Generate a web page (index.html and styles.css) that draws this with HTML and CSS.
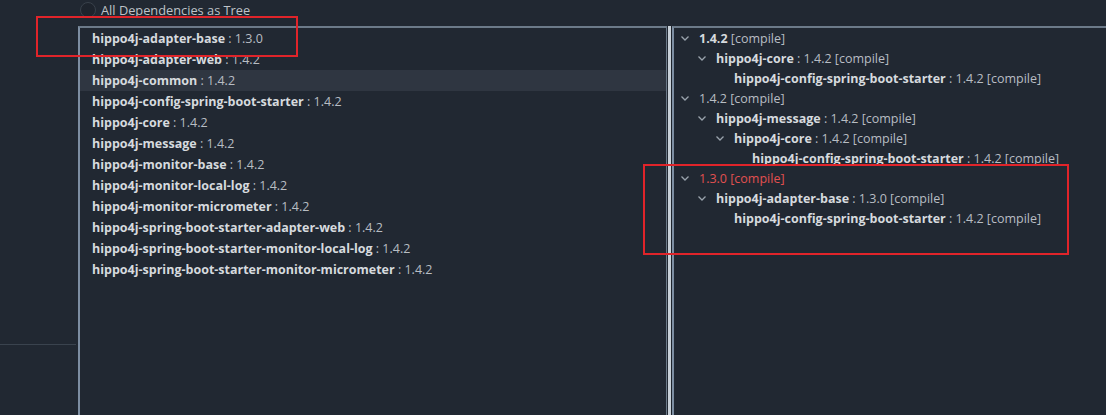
FILE: index.html
```html
<!DOCTYPE html>
<html>
<head>
<meta charset="utf-8">
<link rel="stylesheet" href="styles.css">
</head>
<body>
<div class="page">
  <div class="topbar">
    <span class="radio"></span>
    <span class="toplabel">All Dependencies as Tree</span>
  </div>
  <div class="main">
    <div class="sidebar"><div class="sidetop"></div></div>
    <div class="panel left">
      <div class="row"><b>hippo4j-adapter-base</b> : 1.3.0</div>
      <div class="row"><b>hippo4j-adapter-web</b> : 1.4.2</div>
      <div class="row sel"><b>hippo4j-common</b> : 1.4.2</div>
      <div class="row"><b>hippo4j-config-spring-boot-starter</b> : 1.4.2</div>
      <div class="row"><b>hippo4j-core</b> : 1.4.2</div>
      <div class="row"><b>hippo4j-message</b> : 1.4.2</div>
      <div class="row"><b>hippo4j-monitor-base</b> : 1.4.2</div>
      <div class="row"><b>hippo4j-monitor-local-log</b> : 1.4.2</div>
      <div class="row"><b>hippo4j-monitor-micrometer</b> : 1.4.2</div>
      <div class="row"><b>hippo4j-spring-boot-starter-adapter-web</b> : 1.4.2</div>
      <div class="row"><b>hippo4j-spring-boot-starter-monitor-local-log</b> : 1.4.2</div>
      <div class="row"><b>hippo4j-spring-boot-starter-monitor-micrometer</b> : 1.4.2</div>
    </div>
    <div class="splitter"></div>
    <div class="panel right">
      <div class="trow l0"><svg class="chev" viewBox="0 0 8 5"><polyline points="0.5,0.5 4,4 7.5,0.5"/></svg><span><b>1.4.2</b> [compile]</span></div>
      <div class="trow l1"><svg class="chev" viewBox="0 0 8 5"><polyline points="0.5,0.5 4,4 7.5,0.5"/></svg><span><b>hippo4j-core</b> : 1.4.2 [compile]</span></div>
      <div class="trow l2"><span class="leaf"></span><span><b>hippo4j-config-spring-boot-starter</b> : 1.4.2 [compile]</span></div>
      <div class="trow l0"><svg class="chev" viewBox="0 0 8 5"><polyline points="0.5,0.5 4,4 7.5,0.5"/></svg><span>1.4.2 [compile]</span></div>
      <div class="trow l1"><svg class="chev" viewBox="0 0 8 5"><polyline points="0.5,0.5 4,4 7.5,0.5"/></svg><span><b>hippo4j-message</b> : 1.4.2 [compile]</span></div>
      <div class="trow l2"><svg class="chev" viewBox="0 0 8 5"><polyline points="0.5,0.5 4,4 7.5,0.5"/></svg><span><b>hippo4j-core</b> : 1.4.2 [compile]</span></div>
      <div class="trow l3"><span class="leaf"></span><span><b>hippo4j-config-spring-boot-starter</b> : 1.4.2 [compile]</span></div>
      <div class="trow l0"><svg class="chev" viewBox="0 0 8 5"><polyline points="0.5,0.5 4,4 7.5,0.5"/></svg><span class="conflict">1.3.0 [compile]</span></div>
      <div class="trow l1"><svg class="chev" viewBox="0 0 8 5"><polyline points="0.5,0.5 4,4 7.5,0.5"/></svg><span><b>hippo4j-adapter-base</b> : 1.3.0 [compile]</span></div>
      <div class="trow l2"><span class="leaf"></span><span><b>hippo4j-config-spring-boot-starter</b> : 1.4.2 [compile]</span></div>
    </div>
  </div>
  <div class="mark mark1"></div>
  <div class="mark mark2"></div>
</div>
</body>
</html>
```
FILE: styles.css
```css
html, body {
  margin: 0;
  padding: 0;
  background: #212832;
  width: 1106px;
  height: 415px;
  overflow: hidden;
}
.page {
  position: relative;
  width: 1106px;
  height: 415px;
  display: flex;
  flex-direction: column;
  font-family: "Open Sans", "Noto Sans", sans-serif;
  font-size: 12.5px;
  color: #b8bdc3;
}
.topbar {
  height: 26px;
  display: flex;
  align-items: center;
  padding-left: 80px;
  box-sizing: border-box;
  padding-bottom: 6px;
}
.radio {
  width: 16px;
  height: 16px;
  border: 1px solid #39414b;
  border-radius: 50%;
  box-sizing: border-box;
  background: #1e242d;
}
.toplabel {
  margin-left: 5px;
  color: #bfc3c8;
  font-size: 12.8px;
}
.main {
  flex: 1;
  display: flex;
  min-height: 0;
}
.sidebar {
  width: 78px;
  flex: none;
}
.sidetop {
  width: 76px;
  height: 318px;
  border-bottom: 1px solid #3a434e;
}
.panel {
  border-top: 2px solid #6c7a89;
  box-sizing: border-box;
}
.left {
  width: 589px;
  flex: none;
  border-left: 2px solid #7d8ea2;
  border-right: 1px solid #6c7a89;
}
.splitter {
  width: 3px;
  flex: none;
  margin-left: 1px;
  background: #c9d1d9;
  border-right: 1px solid #1e242d;
}
.right {
  flex: 1;
  border-left: 2px solid #7d8ea2;
}
.row {
  height: 21px;
  line-height: 21px;
  padding-left: 12px;
  white-space: nowrap;
}
.row.sel {
  background: #2f3641;
}
b {
  font-weight: 700;
  color: #d6dade;
}
.trow {
  height: 20px;
  display: flex;
  align-items: center;
  white-space: nowrap;
}
.l0 { padding-left: 7px; }
.l1 { padding-left: 24px; }
.l2 { padding-left: 42px; }
.l3 { padding-left: 60px; }
.chev {
  width: 8px;
  height: 5px;
  margin-right: 10px;
  flex: none;
}
.chev polyline {
  fill: none;
  stroke: #9aa3ad;
  stroke-width: 1.3;
}
.leaf {
  width: 18px;
  flex: none;
}
.conflict {
  color: #e25050;
}
.mark {
  position: absolute;
  border: 2px solid #e0242a;
  box-sizing: border-box;
}
.mark1 {
  left: 36px;
  top: 16px;
  width: 262px;
  height: 41px;
}
.mark2 {
  left: 643px;
  top: 164px;
  width: 426px;
  height: 91px;
}
```
